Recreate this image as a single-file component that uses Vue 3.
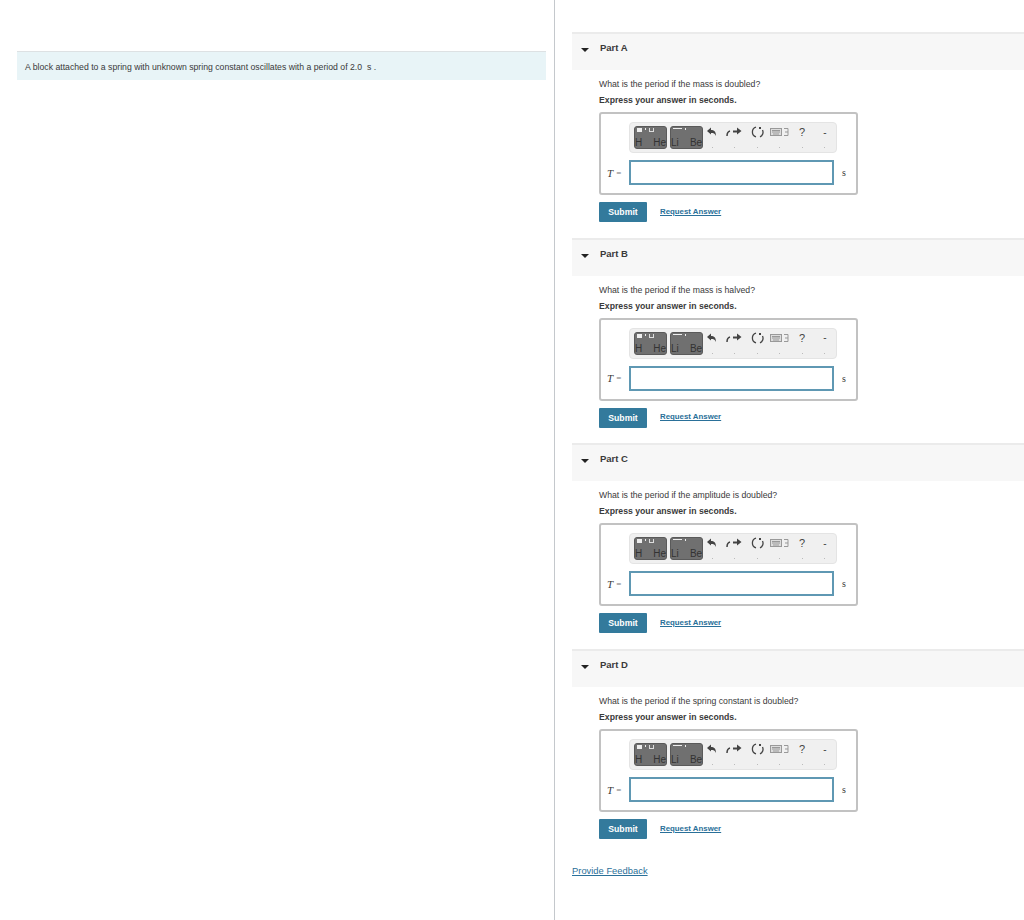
<script setup>
const parts = [
  { name: 'Part A', question: 'What is the period if the mass is doubled?' },
  { name: 'Part B', question: 'What is the period if the mass is halved?' },
  { name: 'Part C', question: 'What is the period if the amplitude is doubled?' },
  { name: 'Part D', question: 'What is the period if the spring constant is doubled?' }
]
</script>

<template>
  <div class="page">
    <div class="left">
      <div class="intro">A block attached to a spring with unknown spring constant oscillates with a period of 2.0 &nbsp;s .</div>
    </div>
    <div class="right">
      <section v-for="part in parts" :key="part.name" class="part">
        <div class="part-head">
          <span class="caret"></span>
          <span class="part-name">{{ part.name }}</span>
        </div>
        <div class="part-body">
          <p class="question">{{ part.question }}</p>
          <p class="express">Express your answer in seconds.</p>
          <div class="answer-box">
            <div class="toolbar">
              <div class="tpl"><span class="marks"><i class="sq"></i><i class="dot"></i><i class="cup"></i></span><span class="els">H&nbsp;&nbsp;&nbsp;&nbsp;He</span></div>
              <div class="tpl"><span class="marks"><i class="bar"></i><i class="dot"></i></span><span class="els">Li&nbsp;&nbsp;&nbsp;&nbsp;Be</span></div>
              <div class="tools-wrap">
                <div class="tools">
                  <svg class="undo" width="12" height="12" viewBox="0 0 12 12"><path d="M1 5 5 1.500V4c3 0 5 1.500 5 6-1-2.500-2.500-3-5-3v1.500z" fill="#444"/></svg>
                  <svg class="redo" width="18" height="12" viewBox="0 0 18 12"><path d="M8 4.500 12 4.500V1.500l4.500 3.500-4.500 3.500V6.500H8z" fill="#444"/><path d="M2 10C2 7 3 5.500 5 5" fill="none" stroke="#444" stroke-width="1.500"/></svg>
                  <svg class="reset" width="14" height="14" viewBox="0 0 14 14"><path d="M5 2.200A5 5 0 0 0 5 11.800M9 11.800A5 5 0 0 0 11.500 5" fill="none" stroke="#444" stroke-width="1.300"/><path d="M8 2h2v2H8z" fill="#444"/></svg>
                  <svg class="keys" width="20" height="10" viewBox="0 0 20 10"><rect x="0.500" y="1.500" width="11" height="7" fill="#ddd" stroke="#999"/><path d="M2 3.500h8M2 5h8M3 7h6" stroke="#999"/><path d="M14 1.500h4v7h-4M15 5h3" fill="none" stroke="#999"/></svg>
                  <span class="help">?</span>
                  <span class="dash">-</span>
                </div>
                <div class="dots"><i v-for="n in 6" :key="n"></i></div>
              </div>
            </div>
            <div class="answer-row">
              <span class="label"><em>T</em> <span class="eq">=</span></span>
              <input class="answer" type="text" />
              <span class="unit">s</span>
            </div>
          </div>
          <div class="actions">
            <button class="submit">Submit</button>
            <a class="request">Request Answer</a>
          </div>
        </div>
      </section>
      <a class="feedback">Provide Feedback</a>
    </div>
  </div>
</template>

<style scoped>
.page {
  display: flex;
  width: 1024px;
  height: 920px;
  font-family: "Liberation Sans", Arial, sans-serif;
  color: #3a3a3a;
  overflow: hidden;
}
.left {
  width: 555px;
  flex: none;
  box-sizing: border-box;
  padding: 51px 8px 0 17px;
  border-right: 1px solid #c4c8cc;
}
.intro {
  height: 29px;
  box-sizing: border-box;
  padding: 9px 0 0 8px;
  background: #e8f4f7;
  border-top: 1px solid #dde1e3;
  font-size: 8.7px;
  line-height: 12px;
}
.right {
  flex: 1;
  padding: 32px 0 0 17px;
}
.part {
  height: 205.7px;
}
.part-head {
  display: flex;
  height: 38px;
  box-sizing: border-box;
  padding: 8px 0 0 9px;
  background: #f7f7f7;
  border-top: 2px solid #ebebeb;
}
.caret {
  width: 0;
  height: 0;
  margin-top: 6px;
  border-left: 4px solid transparent;
  border-right: 4px solid transparent;
  border-top: 4px solid #222;
}
.part-name {
  margin-left: 11px;
  font-size: 9.5px;
  font-weight: bold;
  line-height: 11px;
}
.part-body {
  padding-left: 27px;
}
.question {
  margin: 8px 0 0;
  font-size: 8.7px;
  line-height: 12px;
}
.express {
  margin: 4px 0 0;
  font-size: 8.7px;
  font-weight: bold;
  line-height: 12px;
}
.answer-box {
  width: 259px;
  height: 83px;
  box-sizing: border-box;
  margin-top: 6px;
  padding: 8px 0 0 28px;
  border: 2px solid #c2c2c2;
  border-radius: 3px;
}
.toolbar {
  display: flex;
  gap: 3px;
  width: 208px;
  height: 31px;
  box-sizing: border-box;
  padding: 3px 4px;
  background: #f0f0f0;
  border: 1px solid #e4e4e4;
  border-radius: 4px;
}
.tpl {
  position: relative;
  width: 33px;
  height: 23px;
  flex: none;
  overflow: hidden;
  background: #707070;
  border: 1px solid #5a5a5a;
  border-radius: 3px;
  box-sizing: border-box;
}
.marks {
  display: flex;
  gap: 3px;
  padding: 1px 2px;
}
.marks i {
  display: block;
  background: #eee;
}
.marks .sq { width: 5px; height: 4px; }
.marks .dot { width: 1px; height: 2px; }
.marks .cup { width: 5px; height: 4px; background: none; border: 1px solid #ddd; border-top: 0; box-sizing: border-box; }
.marks .bar { width: 9px; height: 1px; }
.els {
  position: absolute;
  left: 0;
  bottom: 0;
  font-size: 10px;
  line-height: 10px;
  white-space: nowrap;
  color: #333;
}
.tools-wrap {
  flex: 1;
}
.tools {
  display: flex;
  align-items: center;
  height: 12px;
}
.tools .redo { margin-left: 7px; }
.tools .reset { margin-left: 8px; }
.tools .keys { margin-left: 5px; }
.help {
  margin-left: 9px;
  font-size: 11px;
  color: #444;
}
.dash {
  margin-left: 18px;
  font-size: 10px;
  color: #444;
}
.dots {
  display: flex;
  justify-content: space-between;
  width: 113px;
  margin: 9px 0 0 6px;
}
.dots i {
  display: block;
  width: 1px;
  height: 1px;
  background: #bbb;
}
.answer-row {
  display: flex;
  align-items: center;
  margin: 7px 0 0 -23px;
}
.label {
  display: flex;
  align-items: center;
  gap: 3px;
  width: 23px;
  padding-left: 1px;
  box-sizing: border-box;
  font-family: "Liberation Serif", serif;
  font-size: 11px;
}
.eq {
  font-size: 9px;
  color: #777;
}
.answer {
  width: 205px;
  height: 25px;
  box-sizing: border-box;
  margin: 0;
  padding: 0;
  border: 2px solid #5f98b3;
  background: #fff;
  outline: none;
}
.unit {
  margin-left: 8px;
  font-family: "Liberation Serif", serif;
  font-size: 10px;
}
.actions {
  display: flex;
  align-items: center;
  gap: 13px;
  margin-top: 7px;
}
.submit {
  width: 48px;
  height: 20px;
  padding: 0;
  border: 0;
  border-radius: 1px;
  background: #337a9c;
  color: #fff;
  font-family: inherit;
  font-size: 8.7px;
  font-weight: bold;
}
.request {
  margin-bottom: 2px;
  color: #2a7099;
  font-size: 7.85px;
  font-weight: bold;
  text-decoration: underline;
}
.feedback {
  display: block;
  margin-top: 10px;
  color: #2a7099;
  font-size: 9.4px;
  line-height: 12px;
  text-decoration: underline;
}
</style>
